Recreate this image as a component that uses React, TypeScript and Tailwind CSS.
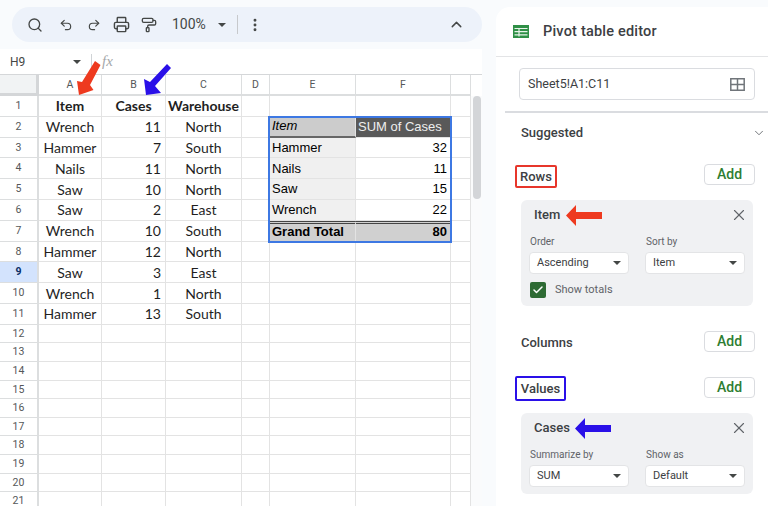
import { Check, ChevronDown, ChevronUp, MoreVertical, PaintRoller, Printer, Redo2, Search, Undo2, X } from "lucide-react";
import type { ReactNode } from "react";

const COLS = "grid grid-cols-[39px_63px_64px_76px_28px_86px_95px_20px]";

const sheetRows: [string, string, string][] = [
  ["Item", "Cases", "Warehouse"],
  ["Wrench", "11", "North"],
  ["Hammer", "7", "South"],
  ["Nails", "11", "North"],
  ["Saw", "10", "North"],
  ["Saw", "2", "East"],
  ["Wrench", "10", "South"],
  ["Hammer", "12", "North"],
  ["Saw", "3", "East"],
  ["Wrench", "1", "North"],
  ["Hammer", "13", "South"],
];

const pivotRows: [string, string][] = [
  ["Hammer", "32"],
  ["Nails", "11"],
  ["Saw", "15"],
  ["Wrench", "22"],
];

function Caret() {
  return <span className="h-0 w-0 border-x-[4px] border-t-[4px] border-x-transparent border-t-[#444746]" />;
}

function Cell({ className = "", children }: { className?: string; children?: ReactNode }) {
  return (
    <div className={`flex items-center overflow-hidden border-r border-b border-[#e3e3e3] whitespace-nowrap ${className}`}>
      {children}
    </div>
  );
}

function PivotCells({ row }: { row: number }) {
  // row 2 is the pivot header, rows 3-6 the body, row 7 the grand total
  if (row === 2) {
    return (
      <>
        <Cell className="border-b-2 border-b-[#666666] bg-[#cccccc] pl-[2px] font-['Liberation_Sans',sans-serif] text-[13px] text-black italic">Item</Cell>
        <Cell className="border-[#595959] bg-[#595959] pl-[2px] font-['Liberation_Sans',sans-serif] text-[13px] text-[#eeeeee]">SUM of Cases</Cell>
      </>
    );
  }
  if (row >= 3 && row <= 6) {
    const [name, value] = pivotRows[row - 3];
    return (
      <>
        <Cell className="bg-[#f0f0f0] pl-[2px] font-['Liberation_Sans',sans-serif] text-[13px] text-black">{name}</Cell>
        <Cell className="justify-end pr-[3px] font-['Liberation_Sans',sans-serif] text-[13px] text-black">{value}</Cell>
      </>
    );
  }
  if (row === 7) {
    return (
      <>
        <Cell className="border-t-[3px] border-double border-t-[#444444] bg-[#d0d0d0] pl-[2px] font-['Liberation_Sans',sans-serif] text-[13px] font-bold text-black">Grand Total</Cell>
        <Cell className="justify-end border-t-[3px] border-double border-t-[#444444] bg-[#d0d0d0] pr-[3px] font-['Liberation_Sans',sans-serif] text-[13px] font-bold text-black">80</Cell>
      </>
    );
  }
  return (
    <>
      <Cell />
      <Cell />
    </>
  );
}

function Sheet() {
  const rows = Array.from({ length: 21 }, (_, i) => i + 1);
  return (
    <div className="relative h-[457px] w-[482px] overflow-hidden bg-white">
      <div className="flex h-[26px] items-center border-b border-[#d5d7d9] pl-[10px] font-['Roboto',sans-serif] text-[12px] text-[#444746]">
        <span className="w-[63px]">H9</span>
        <Caret />
        <span className="ml-[10px] h-[16px] w-px bg-[#d0d3d6]" />
        <span className="ml-[10px] font-['Liberation_Serif',serif] text-[15px] text-[#a4a7aa] italic">fx</span>
      </div>
      <div className={`${COLS} h-[21px] font-['Roboto',sans-serif] text-[10.5px] text-[#555759]`}>
        <div className="border-r-[3px] border-b-[3px] border-[#d4d6d8] bg-[#f1f3f4]" />
        {["A", "B", "C", "D", "E", "F", ""].map((c, i) => (
          <div key={i} className="flex items-center justify-center border-r border-b-2 border-[#dcdedf]">{c}</div>
        ))}
      </div>
      {rows.map((row) => {
        const data = sheetRows[row - 1];
        const isSelected = row === 9;
        return (
          <div key={row} className={`${COLS} ${row <= 11 ? "h-[20.8px]" : "h-[18.62px]"} font-['Lato',sans-serif] text-[14px] text-[#1f1f1f]`}>
            <div className={`flex items-center justify-center border-r-2 border-b border-[#dcdedf] font-['Roboto',sans-serif] text-[10.5px] ${isSelected ? "bg-[#d3e3fd] font-bold text-[#0b2f66]" : "text-[#555759]"}`}>
              {row}
            </div>
            <Cell className={`justify-center ${row === 1 ? "font-bold" : ""}`}>{data?.[0]}</Cell>
            <Cell className={row === 1 ? "justify-center font-bold" : "justify-end pr-[4px]"}>{data?.[1]}</Cell>
            <Cell className={`justify-center ${row === 1 ? "font-bold" : ""}`}>{data?.[2]}</Cell>
            <Cell />
            <PivotCells row={row} />
            <Cell />
          </div>
        );
      })}
      {/* pivot selection outline */}
      <div className="absolute top-[67px] left-[268px] h-[127px] w-[184px] border-2 border-[#3d78e3]" />
      {/* scrollbar */}
      <div className="absolute top-[47px] right-0 bottom-0 w-[11px] bg-[#fafbfc]" />
      <div className="absolute top-[47px] right-[1px] h-[103px] w-[8px] rounded-full bg-[#d3d5d8]" />
      {/* annotation arrows */}
      <svg className="absolute top-0 left-0" width="200" height="50" viewBox="0 49 200 50">
        <polygon points="95,61 100.5,65 90,85 93.5,90 79,95 77,81 82,82" fill="#ee3a1f" />
        <polygon points="167,64 171,68 155,86 161,93 146,95 144,79 150,82" fill="#2a10e8" />
      </svg>
    </div>
  );
}

function Toolbar() {
  const iconClass = "text-[#444746]";
  return (
    <div className="flex h-[35px] w-[470px] items-center rounded-full bg-[#edf2fa] pr-[17px] pl-[15px] font-['Roboto',sans-serif]">
      <Search size={16} strokeWidth={2} className={iconClass} />
      <Undo2 size={14} strokeWidth={2} className={`ml-[16px] ${iconClass}`} />
      <Redo2 size={14} strokeWidth={2} className={`ml-[14px] ${iconClass}`} />
      <Printer size={17} strokeWidth={2} className={`ml-[12px] ${iconClass}`} />
      <PaintRoller size={16} strokeWidth={2} className={`ml-[11px] ${iconClass}`} />
      <span className="ml-[15px] text-[14px] text-[#444746]">100%</span>
      <span className="ml-[12px] flex"><Caret /></span>
      <span className="ml-[11px] h-[19px] w-px bg-[#c7c9cc]" />
      <MoreVertical size={16} strokeWidth={2.4} className={`ml-[9px] ${iconClass}`} />
      <ChevronUp size={17} strokeWidth={2} className={`ml-auto ${iconClass}`} />
    </div>
  );
}

function AddButton({ className = "" }: { className?: string }) {
  return (
    <button className={`flex h-[21px] w-[51px] items-center justify-center rounded-[4px] border border-[#dadce0] text-[14px] font-medium text-[#2e7d32] ${className}`}>
      Add
    </button>
  );
}

function Dropdown({ label, value }: { label: string; value: string }) {
  return (
    <div className="w-[100px]">
      <div className="mb-[3px] pl-[1px] text-[10px] leading-[14px] text-[#5f6368]">{label}</div>
      <div className="flex h-[22px] items-center justify-between rounded-[4px] border border-[#e3e4e6] bg-white pr-[7px] pl-[7px] text-[11px] text-[#3c4043]">
        {value}
        <Caret />
      </div>
    </div>
  );
}

function FieldCard({ name, arrow, children }: { name: string; arrow: ReactNode; children: ReactNode }) {
  return (
    <div className="ml-[25px] w-[232px] rounded-[6px] bg-[#f0f1f3] px-[8px]">
      <div className="flex h-[30px] items-center pl-[5px] text-[13px] font-medium text-[#3c4043]">
        {name}
        {arrow}
        <X size={18} strokeWidth={1.5} className="mr-[-3px] ml-auto text-[#5f6368]" />
      </div>
      {children}
    </div>
  );
}

function Editor() {
  return (
    <div className="h-[499px] w-[272px] overflow-hidden rounded-tl-[14px] bg-white font-['Roboto',sans-serif] text-[#3c4043]">
      <div className="flex h-[50px] items-center border-b border-[#e3e4e6] pl-[17px]">
        <svg width="16" height="13" viewBox="0 0 16 13" className="shrink-0">
          <rect width="16" height="13" fill="#2f8f46" />
          <path d="M1.5 3.5h13M1.5 6.7h13M1.5 9.8h13M6 3.5v8" stroke="#e8f3ea" strokeWidth="1.2" fill="none" />
        </svg>
        <span className="ml-[14px] text-[14.5px] font-medium tracking-[0.2px]">Pivot table editor</span>
      </div>
      <div className="mt-[11px] ml-[23px] flex h-[32px] w-[236px] items-center justify-between rounded-[4px] border border-[#dadce0] pr-[9px] pl-[8px] text-[12.5px]">
        Sheet5!A1:C11
        <svg width="15" height="13" viewBox="0 0 15 13">
          <path d="M0.8 0.8h13.4v11.4H0.8zM0.8 6.5h13.4M7.5 0.8v11.4" stroke="#70757a" strokeWidth="1.5" fill="none" />
        </svg>
      </div>
      <div className="mt-[11px] ml-[9px] h-[2px] bg-[#dadce0]" />
      <div className="flex h-[40px] items-center justify-between pr-[2px] pl-[25px] text-[13px] font-medium">
        Suggested
        <ChevronDown size={14} strokeWidth={1.5} className="text-[#5f6368]" />
      </div>
      <div className="mt-[12px] flex h-[23px] items-start justify-between pr-[13px] pl-[19px]">
        <span className="flex h-[23px] w-[42px] items-center justify-center rounded-[2px] border-2 border-[#e7362b] text-[13px] font-medium">Rows</span>
        <AddButton className="mt-[-1px]" />
      </div>
      <div className="mt-[12px]">
        <FieldCard
          name="Item"
          arrow={
            <svg width="37" height="21" viewBox="0 0 37 21" className="ml-[6px]">
              <polygon points="0,10.5 10,0 10,7 36,7 36,14 10,14 10,21" fill="#ee3a1f" />
            </svg>
          }
        >
          <div className="flex justify-between pt-[5px]">
            <Dropdown label="Order" value="Ascending" />
            <Dropdown label="Sort by" value="Item" />
          </div>
          <div className="flex h-[32px] items-center pl-[1px]">
            <span className="flex h-[16px] w-[16px] items-center justify-center rounded-[2px] bg-[#2e6b34]">
              <Check size={12} strokeWidth={3} className="text-white" />
            </span>
            <span className="ml-[9px] text-[11px] text-[#5f6368]">Show totals</span>
          </div>
        </FieldCard>
      </div>
      <div className="mt-[25px] flex h-[21px] items-start justify-between pr-[13px] pl-[25px]">
        <span className="mt-[2px] text-[13px] font-medium">Columns</span>
        <AddButton />
      </div>
      <div className="mt-[24px] flex h-[25px] items-start justify-between pr-[13px] pl-[19px]">
        <span className="flex h-[25px] w-[51px] items-center justify-center rounded-[2px] border-2 border-[#2a10e8] text-[13px] font-medium">Values</span>
        <AddButton className="mt-[1px]" />
      </div>
      <div className="mt-[12px]">
        <FieldCard
          name="Cases"
          arrow={
            <svg width="37" height="21" viewBox="0 0 37 21" className="ml-[5px]">
              <polygon points="0,10.5 10,0 10,7 36,7 36,14 10,14 10,21" fill="#2a10e8" />
            </svg>
          }
        >
          <div className="flex justify-between pt-[5px] pb-[7px]">
            <Dropdown label="Summarize by" value="SUM" />
            <Dropdown label="Show as" value="Default" />
          </div>
        </FieldCard>
      </div>
    </div>
  );
}

export default function App() {
  return (
    <div className="flex h-[506px] w-[768px] overflow-hidden bg-[#f9fbfd]">
      <div className="w-[496px] pt-[7px]">
        <div className="pl-[12px]">
          <Toolbar />
        </div>
        <div className="mt-[7px]">
          <Sheet />
        </div>
      </div>
      <div className="pt-[7px]">
        <Editor />
      </div>
    </div>
  );
}
